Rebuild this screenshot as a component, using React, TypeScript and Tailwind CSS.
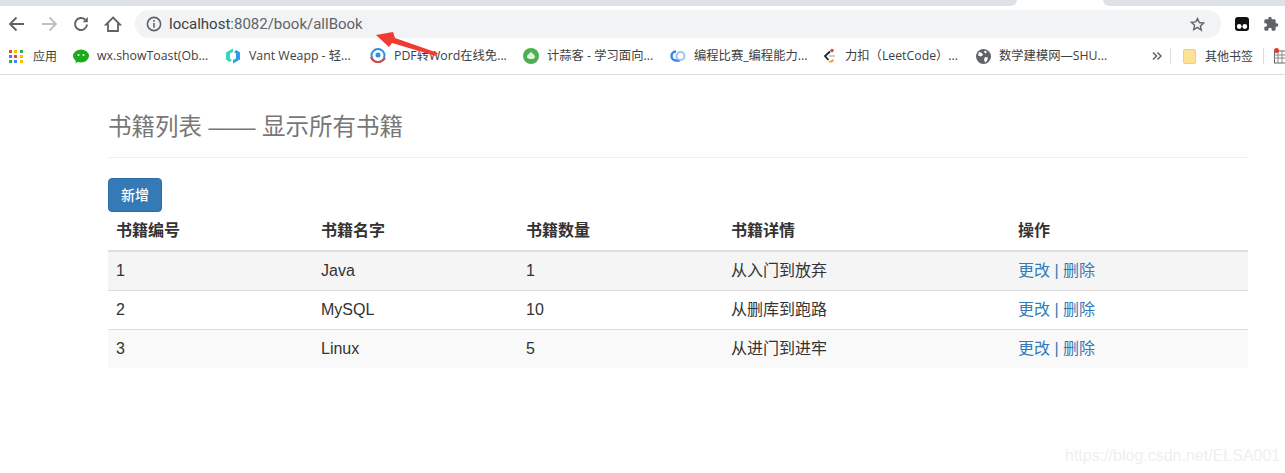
import React from "react";

const CJK = "font-['Liberation_Sans','Noto_Sans_CJK_SC',sans-serif]";

function Bm({ icon, text, w }: { icon: React.ReactNode; text: string; w: string }) {
  return (
    <div className={`flex items-center shrink-0 ${w}`}>
      <span className="w-4 h-4 flex items-center justify-center shrink-0">{icon}</span>
      <span className="ml-2 pt-px text-[12.300px] text-[#3c4043] whitespace-nowrap font-['Open_Sans','Noto_Sans_CJK_SC',sans-serif]">{text}</span>
    </div>
  );
}

const rows = [
  ["1", "Java", "1", "从入门到放弃", "bg-[#f5f5f5]"],
  ["2", "MySQL", "10", "从删库到跑路", "bg-white"],
  ["3", "Linux", "5", "从进门到进牢", "bg-[#f9f9f9]"],
];

const appsColors = ["#ea4335", "#fbbc04", "#34a853", "#4285f4", "#ea4335", "#fbbc04", "#34a853", "#4285f4", "#fbbc04"];

export default function App() {
  return (
    <div className={`relative w-[1285px] h-[473px] overflow-hidden bg-white ${CJK}`}>
      {/* tab strip */}
      <div className="flex h-[6px] bg-white">
        <div className="w-[1017px] bg-[#dee1e6] rounded-br-[6px]" />
        <div className="ml-[86px] flex-1 bg-[#dee1e6] rounded-bl-[6px]" />
      </div>

      {/* toolbar */}
      <div className="flex items-center h-8 pt-1 pl-2 bg-white">
        <svg width="18" height="18" viewBox="0 0 18 18" fill="none" stroke="#5f6368" strokeWidth="1.9">
          <path d="M16 9H2.500M8.500 2.500L2 9l6.500 6.500" />
        </svg>
        <svg className="ml-[14px]" width="18" height="18" viewBox="0 0 18 18" fill="none" stroke="#bdc1c6" strokeWidth="1.9">
          <path d="M2 9h13.500M9.500 2.500L16 9l-6.500 6.500" />
        </svg>
        <svg className="ml-[14px]" width="18" height="18" viewBox="0 0 18 18" fill="none" stroke="#5f6368" strokeWidth="2">
          <path d="M15 9.500A6 6 0 1 1 13.200 4.700" />
          <path d="M15.800 2v5.200h-5.200z" fill="#5f6368" stroke="none" />
        </svg>
        <svg className="ml-[14px]" width="18" height="18" viewBox="0 0 18 18" fill="none" stroke="#5f6368" strokeWidth="1.800">
          <path d="M9 2.500L16 9.500H14V16H4V9.500H2Z" />
        </svg>
        <div className="flex items-center ml-[13px] w-[1086px] h-7 rounded-full bg-[#f1f3f4] pl-[11px] pr-[16px]">
          <svg width="16" height="16" viewBox="0 0 15 15" fill="none" stroke="#5f6368" strokeWidth="1.500">
            <circle cx="7.500" cy="7.500" r="6.200" />
            <path d="M7.500 6.500v4.500M7.500 3.800v1.500" />
          </svg>
          <span className="ml-[7px] text-[15px] text-[#5f6368] font-['Roboto',sans-serif]">
            <span className="text-[#3c4043]">localhost</span>:8082/book/allBook
          </span>
          <svg className="ml-auto" width="15" height="15" viewBox="0 0 24 24" fill="none" stroke="#5f6368" strokeWidth="2.200">
            <path d="M12 2.500l2.900 6.300 6.900.8-5.100 4.700 1.400 6.800L12 16.700l-6.100 3.400 1.400-6.800-5.100-4.700 6.900-.8z" />
          </svg>
        </div>
        <svg className="ml-[13px]" width="16" height="16" viewBox="0 0 16 16">
          <rect x="1" y="1" width="14" height="14" rx="3" fill="#111" />
          <circle cx="5.200" cy="10.500" r="2.400" fill="#fff" />
          <circle cx="10.800" cy="10.500" r="2.400" fill="#fff" />
        </svg>
        <svg className="ml-[13px]" width="16" height="16" viewBox="0 0 24 24" fill="#5f6368">
          <path d="M20.500 11H19V7a2 2 0 0 0-2-2h-4V3.500a2.500 2.500 0 0 0-5 0V5H4a2 2 0 0 0-2 2v3.800h1.500a2.700 2.700 0 0 1 0 5.400H2V20a2 2 0 0 0 2 2h3.800v-1.500a2.700 2.700 0 0 1 5.400 0V22H17a2 2 0 0 0 2-2v-4h1.500a2.500 2.500 0 0 0 0-5z" />
        </svg>
      </div>

      {/* bookmarks */}
      <div className="flex items-center h-[37px] pl-[9px] bg-white border-b border-[#dadce0] overflow-hidden">
        <div className="flex items-center w-[64px] shrink-0">
          <div className="grid grid-cols-3 gap-[2px] w-[14px]">
            {appsColors.map((c, i) => (
              <span key={i} className="w-[3px] h-[3px]" style={{ background: c }} />
            ))}
          </div>
          <span className="ml-[10px] pt-px text-[12px] text-[#3c4043]">应用</span>
        </div>
        <Bm w="w-[152px]" text="wx.showToast(Ob..." icon={
          <svg width="16" height="15" viewBox="0 0 16 15"><ellipse cx="8" cy="7" rx="8" ry="6.500" fill="#1aad19" /><path d="M3 11l-.5 3.500L6 12z" fill="#1aad19" /><circle cx="5.500" cy="6" r="1" fill="#fff" /><circle cx="10.500" cy="6" r="1" fill="#fff" /></svg>
        } />
        <Bm w="w-[145px]" text="Vant Weapp - 轻..." icon={
          <svg width="16" height="16" viewBox="0 0 16 16" fill="none"><path d="M8 0.500V4L5 5.500v5l2 1.500-2.500 2L1 11.500v-7z" fill="#37d6b8" /><path d="M8 15.500V12l3-1.500v-5L9 4l2.500-2L15 4.500v7z" fill="#2f9bf0" /></svg>
        } />
        <Bm w="w-[153px]" text="PDF转Word在线免..." icon={
          <svg width="16" height="16" viewBox="0 0 16 16" fill="none"><circle cx="8" cy="7.500" r="6.500" stroke="#2f8fe0" strokeWidth="2" /><circle cx="8" cy="7" r="2.500" fill="#2f8fe0" /><path d="M1 9c2 6 10 7 14 1" stroke="#e0413a" strokeWidth="2" /></svg>
        } />
        <Bm w="w-[147px]" text="计蒜客 - 学习面向..." icon={
          <svg width="16" height="16" viewBox="0 0 16 16"><circle cx="8" cy="8" r="8" fill="#4caf50" /><path d="M8 3.500c.8 1.800 4 3 4 5.500 0 1.500-2 2-4 2s-4-.5-4-2c0-2.500 3.200-3.700 4-5.500z" fill="#dff2df" /></svg>
        } />
        <Bm w="w-[151px]" text="编程比赛_编程能力..." icon={
          <svg width="16" height="12" viewBox="0 0 16 12" fill="none"><path d="M6 1.500a4.500 4.500 0 0 0 0 9h4" stroke="#3b82e6" strokeWidth="2.500" /><circle cx="10.500" cy="6" r="4" stroke="#9cc6f2" strokeWidth="2" /></svg>
        } />
        <Bm w="w-[154px]" text="力扣（LeetCode）..." icon={
          <svg width="15" height="16" viewBox="0 0 15 16" fill="none"><path d="M8 3.500L3 8l3.500 4" stroke="#222" strokeWidth="1.800" /><path d="M7 8h6" stroke="#bbb" strokeWidth="1.500" /><path d="M7 13.500c1.500.5 3 0 4.500-1.500" stroke="#f0a020" strokeWidth="1.800" /><circle cx="10" cy="2.500" r="1.700" fill="#e04030" /></svg>
        } />
        <Bm w="w-[177px]" text="数学建模网—SHU..." icon={
          <svg width="15" height="15" viewBox="0 0 15 15"><circle cx="7.500" cy="7.500" r="7.500" fill="#5f6368" /><path d="M3 3l3 1 1 2-2 1.500L2 6.500zM9 8l3 .5-1 3.500-2 1.500-1-3zM9 1.500l2 1.500-1.500 1.500L8 3z" fill="#fff" /></svg>
        } />
        <svg width="10" height="10" viewBox="0 0 10 10" fill="none" stroke="#5f6368" strokeWidth="1.500" className="shrink-0">
          <path d="M1 1.500L4.500 5 1 8.500M5.500 1.500L9 5 5.500 8.500" />
        </svg>
        <div className="ml-[8px] w-px h-4 bg-[#dadce0] shrink-0" />
        <svg className="ml-[12px] shrink-0" width="13" height="15" viewBox="0 0 13 15">
          <rect x="0.500" y="0.500" width="12" height="14" rx="1.500" fill="#fde293" stroke="#f6cf68" />
        </svg>
        <span className="ml-[9px] pt-px text-[12px] text-[#3c4043] whitespace-nowrap shrink-0">其他书签</span>
        <div className="ml-[10px] w-px h-4 bg-[#dadce0] shrink-0" />
        <svg className="ml-[10px] shrink-0" width="12" height="16" viewBox="0 0 12 16" fill="none">
          <rect x="0.500" y="3" width="14" height="12" stroke="#666" />
          <path d="M0 7h12M0 10h12M4 3v12M8 3v12" stroke="#888" />
          <circle cx="2.500" cy="2.500" r="2.500" fill="#e53935" />
        </svg>
      </div>

      {/* page */}
      <div className="w-[1140px] ml-[108px]">
        <div className="h-[83px] pt-[36px] border-b border-[#eeeeee]">
          <h1 className="text-[23.500px] leading-[32px] text-[#777777]">书籍列表 —— 显示所有书籍</h1>
        </div>
        <button className="block mt-5 h-[34px] w-[54px] rounded-[4px] bg-[#337ab7] border border-[#2e6da4] text-[14px] font-medium text-white">
          新增
        </button>
        <table className="w-full table-fixed border-collapse text-[16px] text-[#333333]">
          <thead>
            <tr className="border-b-2 border-[#dddddd]">
              <th className="w-[205px] h-[39px] px-2 text-left font-bold">书籍编号</th>
              <th className="w-[205px] px-2 text-left font-bold">书籍名字</th>
              <th className="w-[205px] px-2 text-left font-bold">书籍数量</th>
              <th className="w-[287px] px-2 text-left font-bold">书籍详情</th>
              <th className="px-2 text-left font-bold">操作</th>
            </tr>
          </thead>
          <tbody>
            {rows.map((r, i) => (
              <tr key={r[0]} className={`${r[4]} ${i < 2 ? "border-b border-[#dddddd]" : ""}`}>
                <td className="h-[39px] px-2">{r[0]}</td>
                <td className="px-2">{r[1]}</td>
                <td className="px-2">{r[2]}</td>
                <td className="px-2">{r[3]}</td>
                <td className="px-2 text-[#337ab7]">更改 | 删除</td>
              </tr>
            ))}
          </tbody>
        </table>
      </div>

      {/* red annotation arrow */}
      <svg className="absolute left-[370px] top-[28px]" width="72" height="30" viewBox="0 0 72 30">
        <polygon points="6,7 23,4 25,10 68,25 66,28 22,15 19,19" fill="#f03a34" />
      </svg>

      {/* watermark */}
      <span className="absolute left-[1065px] top-[444px] text-[16px] text-[#efefef] font-['Liberation_Sans',sans-serif] whitespace-nowrap">
        https://blog.csdn.net/ELSA001
      </span>
    </div>
  );
}
